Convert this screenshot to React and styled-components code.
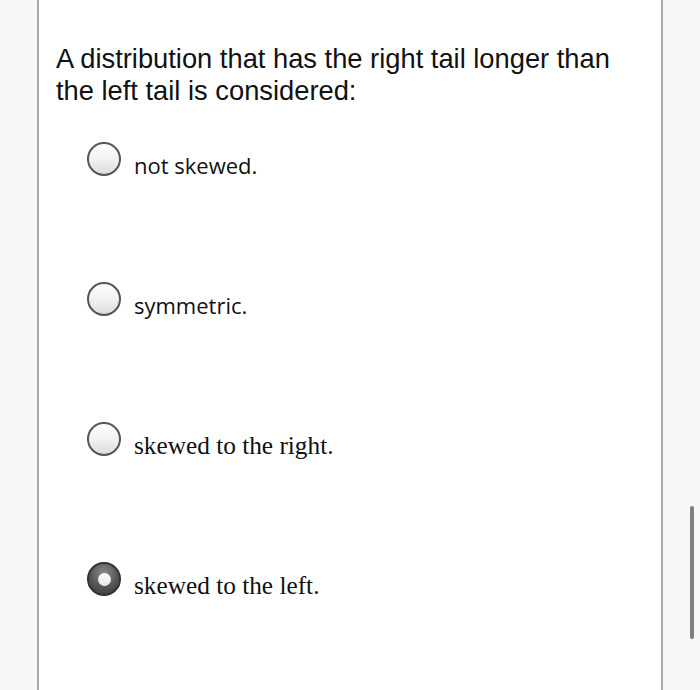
import React from 'react';
import styled, { createGlobalStyle } from 'styled-components';

const GlobalStyle = createGlobalStyle`
  html, body {
    margin: 0;
    padding: 0;
    background: #f7f7f7;
  }
`;

const Page = styled.div`
  width: 700px;
  height: 690px;
  display: flex;
  padding-left: 37px;
  box-sizing: border-box;
  background: #f7f7f7;
  position: relative;
  overflow: hidden;
`;

const Panel = styled.div`
  width: 626px;
  height: 690px;
  box-sizing: border-box;
  background: #ffffff;
  border-left: 2px solid #a9a9a9;
  border-right: 2px solid #a9a9a9;
  padding: 43px 0 0 17px;
`;

const Question = styled.div`
  font-family: 'Liberation Sans', Arial, sans-serif;
  font-size: 27.3px;
  line-height: 32px;
  color: #111;
  margin-bottom: 35px;
`;

const Options = styled.div`
  display: flex;
  flex-direction: column;
  gap: 106px;
  padding-left: 31px;
`;

const Option = styled.label`
  display: flex;
  align-items: center;
  gap: 13px;
  height: 34px;
`;

const Radio = styled.span`
  width: 34px;
  height: 34px;
  box-sizing: border-box;
  border-radius: 50%;
  border: 2px solid #555;
  flex-shrink: 0;
  display: flex;
  align-items: center;
  justify-content: center;
  background: ${p =>
    p.checked
      ? 'radial-gradient(circle at 50% 30%, #8a8a8a 0%, #555 55%, #3a3a3a 100%)'
      : 'linear-gradient(to bottom, #ffffff 0%, #f2f2f2 50%, #dcdcdc 100%)'};
  border-color: ${p => (p.checked ? '#333' : '#555')};

  &::after {
    content: '';
    display: ${p => (p.checked ? 'block' : 'none')};
    width: 13px;
    height: 13px;
    border-radius: 50%;
    background: linear-gradient(to bottom, #ffffff, #e6e6e6);
  }
`;

const Label = styled.span`
  font-family: ${p =>
    p.serif
      ? "'Liberation Serif', 'Times New Roman', serif"
      : "'Open Sans', 'Noto Sans', sans-serif"};
  font-size: ${p => (p.serif ? '25.3px' : '22px')};
  color: #111;
  position: relative;
  top: 6px;
`;

const Scrollbar = styled.div`
  position: absolute;
  right: 6px;
  top: 506px;
  width: 4px;
  height: 133px;
  border-radius: 2px;
  background: #7f7f7f;
`;

const options = [
  { text: 'not skewed.', serif: false, checked: false },
  { text: 'symmetric.', serif: false, checked: false },
  { text: 'skewed to the right.', serif: true, checked: false },
  { text: 'skewed to the left.', serif: true, checked: true },
];

export default function App() {
  return (
    <Page>
      <GlobalStyle />
      <Panel>
        <Question>
          A distribution that has the right tail longer than
          <br />
          the left tail is considered:
        </Question>
        <Options>
          {options.map(o => (
            <Option key={o.text}>
              <Radio checked={o.checked} />
              <Label serif={o.serif}>{o.text}</Label>
            </Option>
          ))}
        </Options>
      </Panel>
      <Scrollbar />
    </Page>
  );
}
